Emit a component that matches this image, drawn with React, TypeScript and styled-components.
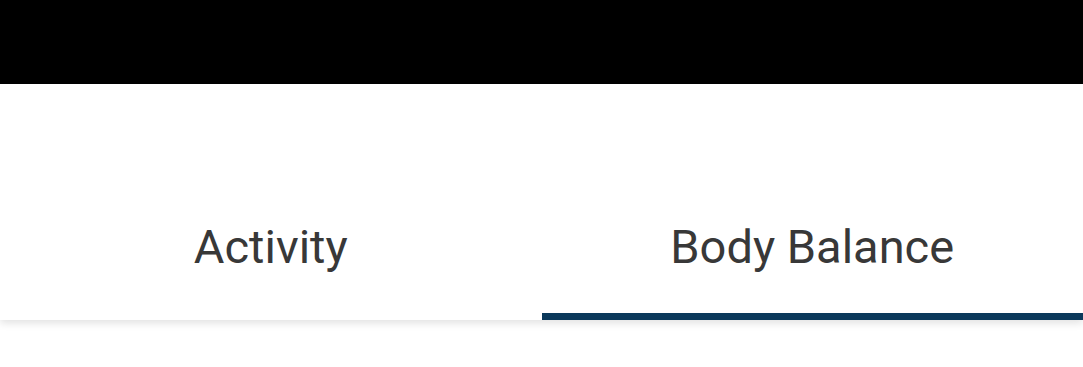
import React, { useState } from 'react';
import styled, { createGlobalStyle } from 'styled-components';

const GlobalStyle = createGlobalStyle`
  html, body {
    margin: 0;
    padding: 0;
    background: #ffffff;
    font-family: Roboto, "Noto Sans", sans-serif;
  }
`

const Page = styled.div`
  width: 100%;
  min-height: 367px;
  display: flex;
  flex-direction: column;
`

const StatusBar = styled.div`
  height: 84px;
  background: #000;
`

const TabBar = styled.nav`
  height: 236px;
  display: grid;
  grid-template-columns: 1fr 1fr;
  background: #fff;
  box-shadow: 0 3px 8px rgba(0, 0, 0, 0.12);
  position: relative;
  z-index: 1;
`

const Tab = styled.button<{ $active?: boolean }>`
  all: unset;
  cursor: pointer;
  display: flex;
  align-items: center;
  justify-content: center;
  padding-top: 95px;
  font-family: Roboto, "Noto Sans", sans-serif;
  font-size: 47px;
  color: #383838;
  border-bottom: 7px solid ${p => (p.$active ? '#0b395b' : 'transparent')};
`

const Body = styled.main`
  flex: 1;
  background: #fff;
`

export default function App() {
  const [tab, setTab] = useState(1);
  const tabs = ['Activity', 'Body Balance'];
  return (
    <>
      <GlobalStyle />
      <Page>
        <StatusBar />
        <TabBar>
          {tabs.map((t, i) => (
            <Tab key={t} $active={tab === i} onClick={() => setTab(i)}>
              {t}
            </Tab>
          ))}
        </TabBar>
        <Body />
      </Page>
    </>
  );
}
